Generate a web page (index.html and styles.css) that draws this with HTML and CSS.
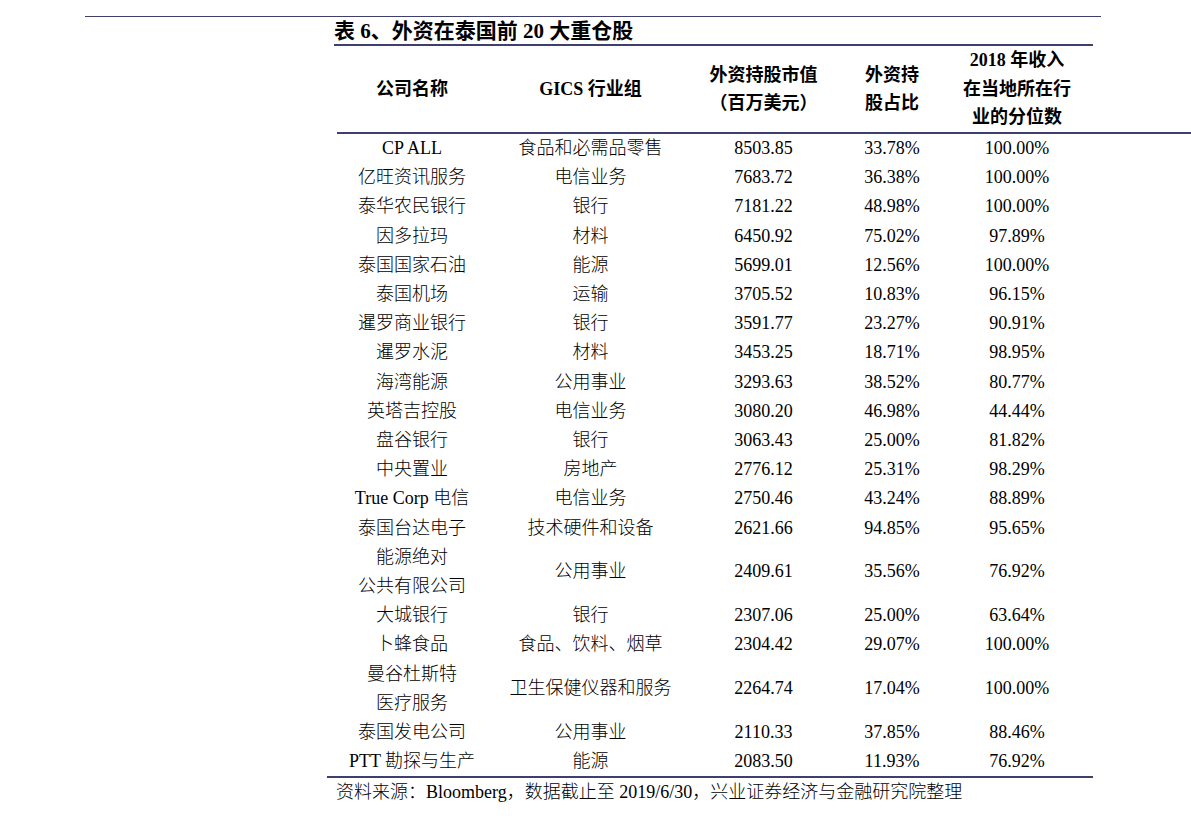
FILE: index.html
```html
<!DOCTYPE html>
<html lang="zh-CN">
<head>
<meta charset="utf-8">
<title>表 6、外资在泰国前 20 大重仓股</title>
<link rel="stylesheet" href="styles.css">
</head>
<body>
<div class="page">
  <div class="rule-top"></div>
  <div class="title">表 6、外资在泰国前 20 大重仓股</div>
  <div class="grid head">
    <div class="cell">公司名称</div>
    <div class="cell">GICS 行业组</div>
    <div class="cell">外资持股市值<br>（百万美元）</div>
    <div class="cell">外资持<br>股占比</div>
    <div class="cell">2018 年收入<br>在当地所在行<br>业的分位数</div>
  </div>
  <div class="rule-head"></div>
  <div class="rows">
    <div class="grid row"><div class="cell">CP ALL</div><div class="cell">食品和必需品零售</div><div class="cell">8503.85</div><div class="cell">33.78%</div><div class="cell">100.00%</div></div>
    <div class="grid row"><div class="cell">亿旺资讯服务</div><div class="cell">电信业务</div><div class="cell">7683.72</div><div class="cell">36.38%</div><div class="cell">100.00%</div></div>
    <div class="grid row"><div class="cell">泰华农民银行</div><div class="cell">银行</div><div class="cell">7181.22</div><div class="cell">48.98%</div><div class="cell">100.00%</div></div>
    <div class="grid row"><div class="cell">因多拉玛</div><div class="cell">材料</div><div class="cell">6450.92</div><div class="cell">75.02%</div><div class="cell">97.89%</div></div>
    <div class="grid row"><div class="cell">泰国国家石油</div><div class="cell">能源</div><div class="cell">5699.01</div><div class="cell">12.56%</div><div class="cell">100.00%</div></div>
    <div class="grid row"><div class="cell">泰国机场</div><div class="cell">运输</div><div class="cell">3705.52</div><div class="cell">10.83%</div><div class="cell">96.15%</div></div>
    <div class="grid row"><div class="cell">暹罗商业银行</div><div class="cell">银行</div><div class="cell">3591.77</div><div class="cell">23.27%</div><div class="cell">90.91%</div></div>
    <div class="grid row"><div class="cell">暹罗水泥</div><div class="cell">材料</div><div class="cell">3453.25</div><div class="cell">18.71%</div><div class="cell">98.95%</div></div>
    <div class="grid row"><div class="cell">海湾能源</div><div class="cell">公用事业</div><div class="cell">3293.63</div><div class="cell">38.52%</div><div class="cell">80.77%</div></div>
    <div class="grid row"><div class="cell">英塔吉控股</div><div class="cell">电信业务</div><div class="cell">3080.20</div><div class="cell">46.98%</div><div class="cell">44.44%</div></div>
    <div class="grid row"><div class="cell">盘谷银行</div><div class="cell">银行</div><div class="cell">3063.43</div><div class="cell">25.00%</div><div class="cell">81.82%</div></div>
    <div class="grid row"><div class="cell">中央置业</div><div class="cell">房地产</div><div class="cell">2776.12</div><div class="cell">25.31%</div><div class="cell">98.29%</div></div>
    <div class="grid row"><div class="cell">True Corp 电信</div><div class="cell">电信业务</div><div class="cell">2750.46</div><div class="cell">43.24%</div><div class="cell">88.89%</div></div>
    <div class="grid row"><div class="cell">泰国台达电子</div><div class="cell">技术硬件和设备</div><div class="cell">2621.66</div><div class="cell">94.85%</div><div class="cell">95.65%</div></div>
    <div class="grid row"><div class="cell">能源绝对<br>公共有限公司</div><div class="cell">公用事业</div><div class="cell">2409.61</div><div class="cell">35.56%</div><div class="cell">76.92%</div></div>
    <div class="grid row"><div class="cell">大城银行</div><div class="cell">银行</div><div class="cell">2307.06</div><div class="cell">25.00%</div><div class="cell">63.64%</div></div>
    <div class="grid row"><div class="cell">卜蜂食品</div><div class="cell">食品、饮料、烟草</div><div class="cell">2304.42</div><div class="cell">29.07%</div><div class="cell">100.00%</div></div>
    <div class="grid row"><div class="cell">曼谷杜斯特<br>医疗服务</div><div class="cell">卫生保健仪器和服务</div><div class="cell">2264.74</div><div class="cell">17.04%</div><div class="cell">100.00%</div></div>
    <div class="grid row"><div class="cell">泰国发电公司</div><div class="cell">公用事业</div><div class="cell">2110.33</div><div class="cell">37.85%</div><div class="cell">88.46%</div></div>
    <div class="grid row"><div class="cell">PTT 勘探与生产</div><div class="cell">能源</div><div class="cell">2083.50</div><div class="cell">11.93%</div><div class="cell">76.92%</div></div>
  </div>
  <div class="rule-bottom"></div>
  <div class="source">资料来源：Bloomberg，数据截止至 2019/6/30，兴业证券经济与金融研究院整理</div>
</div>
</body>
</html>
```
FILE: styles.css
```css
html, body {
  margin: 0;
  padding: 0;
  background: #ffffff;
}
body {
  font-family: "Liberation Serif", "Noto Sans CJK SC", serif;
  color: #000000;
  font-size: 18px;
}
.page {
  padding-top: 16px;
  width: 1191px;
}
.rule-top {
  margin-left: 85px;
  width: 1016px;
  border-top: 1.5px solid #3f3f6e;
}
.title {
  margin-left: 334px;
  width: 759px;
  font-size: 21px;
  font-weight: bold;
  line-height: 28px;
  height: 27px;
  border-bottom: 2px solid #3f3f6e;
}
.grid {
  display: grid;
  grid-template-columns: 150px 207px 139px 118px 132px;
  margin-left: 337px;
  width: 746px;
}
.head {
  height: 86px;
  font-weight: bold;
  line-height: 28.5px;
  align-items: center;
}
.cell {
  text-align: center;
  white-space: nowrap;
}
.rows {
  font-weight: 300;
}
.rule-head {
  margin-left: 337px;
  width: 854px;
  border-top: 2px solid #3f3f6e;
}
.row {
  line-height: 29.2px;
  align-items: center;
}
.rule-bottom {
  margin-left: 327px;
  width: 766px;
  border-top: 2px solid #3f3f6e;
}
.source {
  margin-left: 336px;
  line-height: 28px;
  font-size: 18px;
  font-weight: 300;
}
```
